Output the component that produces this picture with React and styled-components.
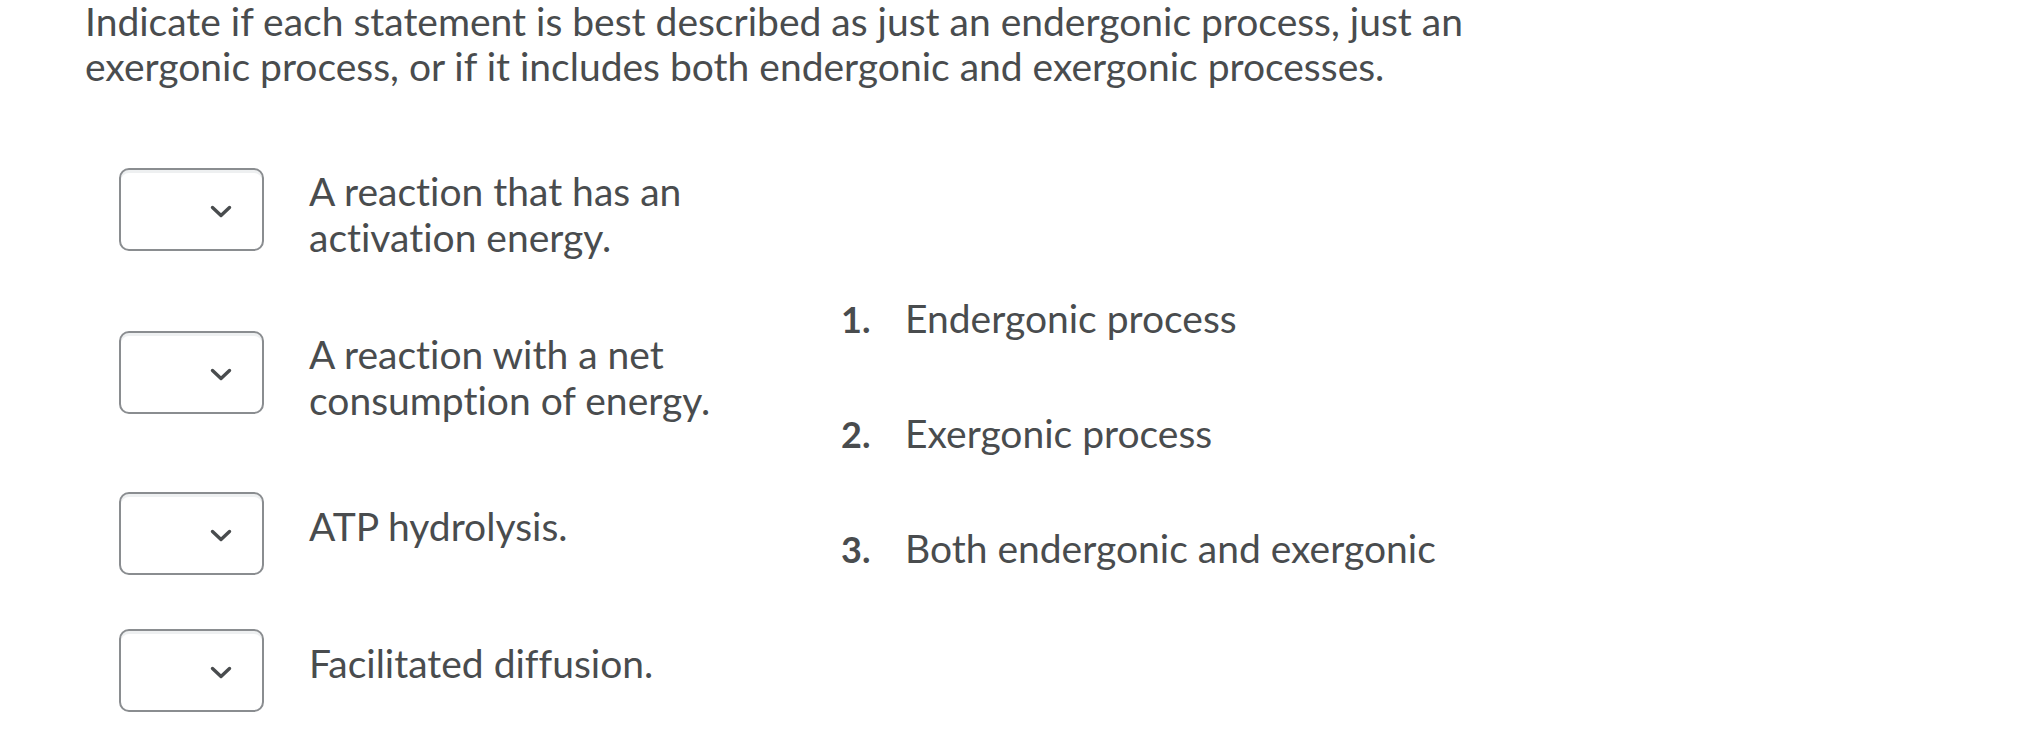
import React from 'react';
import styled, { createGlobalStyle } from 'styled-components';

const GlobalStyle = createGlobalStyle`
  body {
    margin: 0;
    background: #fff;
    font-family: Lato, "Open Sans", sans-serif;
    font-variant-ligatures: no-common-ligatures;
    color: #494c4e;
  }
`;

const Page = styled.div`
  padding: 0 0 0 85px;
`;

const Prompt = styled.p`
  margin: -1px 0 0;
  font-size: 39px;
  line-height: 45px;
  width: 1460px;
`;

const Matching = styled.div`
  display: flex;
  align-items: center;
  margin: 76px 0 0 34px;
`;

const Statements = styled.div`
  display: flex;
  flex-direction: column;
  width: 722px;
`;

const Row = styled.div`
  display: flex;
  align-items: flex-start;
  gap: 45px;
  min-height: ${(p) => p.$height || 0}px;
`;

const Dropdown = styled.div`
  box-sizing: border-box;
  flex: none;
  width: 145px;
  height: 83px;
  margin-top: 3px;
  border: 2px solid #8a8d90;
  border-radius: 10px;
  box-shadow: inset 0 3px 0 #eef0f1;
  background: #fff;
  display: flex;
  align-items: center;
  justify-content: flex-end;
  padding: 4px 30px 0 0;
`;

// one-line statements sit nearer the middle of the dropdown
const Statement = styled.div`
  font-size: 39px;
  line-height: 46px;
  width: 420px;
  padding-top: ${(p) => (p.$short ? 14 : 3)}px;
`;

const Choices = styled.ol`
  list-style: none;
  margin: 0 0 10px;
  padding: 0;
  display: flex;
  flex-direction: column;
  gap: 68px;
`;

const Choice = styled.li`
  display: flex;
  align-items: baseline;
  font-size: 39px;
  line-height: 46px;
`;

const Num = styled.span`
  width: 64px;
  font-weight: 700;
  font-size: 36px;
`;

const Chevron = () => (
  <svg width="22" height="14" viewBox="0 0 22 14" fill="none">
    <path d="M2.5 2.5 L11 10.5 L19.5 2.5" stroke="#494c4e" strokeWidth="3.4" strokeLinecap="round" strokeLinejoin="round" />
  </svg>
);

const statements = [
  { text: 'A reaction that has an activation energy.', height: 163 },
  { text: 'A reaction with a net consumption of energy.', height: 161 },
  { text: 'ATP hydrolysis.', height: 137, short: true },
  { text: 'Facilitated diffusion.', short: true },
];

const choices = ['Endergonic process', 'Exergonic process', 'Both endergonic and exergonic'];

export default function App() {
  return (
    <Page>
      <GlobalStyle />
      <Prompt>
        Indicate if each statement is best described as just an endergonic process, just an
        exergonic process, or if it includes both endergonic and exergonic processes.
      </Prompt>
      <Matching>
        <Statements>
          {statements.map((s) => (
            <Row key={s.text} $height={s.height}>
              <Dropdown>
                <Chevron />
              </Dropdown>
              <Statement $short={s.short}>{s.text}</Statement>
            </Row>
          ))}
        </Statements>
        <Choices>
          {choices.map((c, i) => (
            <Choice key={c}>
              <Num>{i + 1}.</Num>
              {c}
            </Choice>
          ))}
        </Choices>
      </Matching>
    </Page>
  );
}
